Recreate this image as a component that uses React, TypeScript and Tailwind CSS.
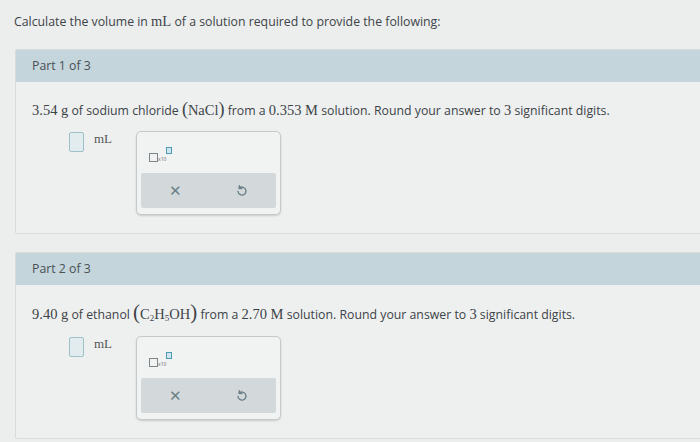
const sans = { fontFamily: '"Open Sans", "DejaVu Sans", sans-serif' }

function Serif({ children }: { children: React.ReactNode }) {
  return <span className="font-['Liberation_Serif',serif] text-[14.5px]">{children}</span>
}

function UndoIcon() {
  return (
    <svg width="12" height="13" viewBox="0 0 12 13" fill="none" stroke="#6b7f88" strokeWidth="1.4" strokeLinecap="round">
      <path d="M3.2 4.2 A4 4 0 1 1 2 7.5" />
      <polyline points="3.4 1.6 3.2 4.3 5.9 4.5" />
    </svg>
  )
}

function AnswerRow() {
  return (
    <div className="flex items-start">
      <div className="flex items-center gap-[10px] mt-[1px]">
        <div className="w-[15px] h-[20px] border border-[#9ec1c9] bg-[#e2ecee] rounded-[2px]" />
        <span className="font-['Liberation_Serif',serif] text-[13px] text-[#555] -mt-[6px]">mL</span>
      </div>
      <div className="ml-[24px] w-[145px] h-[84px] border border-[#c4cacc] rounded-[5px] bg-[#f1f3f3] shadow-[0_1px_2px_rgba(0,0,0,0.15)] px-[4px] pt-[12px]">
        <div className="flex items-end pl-[8px] h-[18px]">
          <div className="w-[9px] h-[9px] border border-[#7c8589]" />
          <span className="text-[5px] text-[#666] leading-none">x10</span>
          <div className="w-[6px] h-[7px] border border-[#4d9ab3] bg-[#cfe6ee] mb-[8px]" />
        </div>
        <div className="mt-[11px] h-[35px] bg-[#d3d9db] rounded-[2px] flex items-center justify-between px-[28px]">
          <span className="text-[#6b7f88] text-[15px] leading-none" style={sans}>✕</span>
          <UndoIcon />
        </div>
      </div>
    </div>
  )
}

function Part({ label, tall, children }: { label: string; tall?: boolean; children: React.ReactNode }) {
  return (
    <div className="border border-[#d8dcdc] rounded-[2px] bg-[#eef0f0]">
      <div className="h-[32px] bg-[#c4d5db] flex items-center pl-[16px] text-[12.3px] text-[#4a5055]">{label}</div>
      <div className="pl-[16px] pt-[17px] pb-[18px]">
        <div className="text-[12.3px] text-[#3d4347] h-[22px] flex items-center">{children}</div>
        <div className={tall ? 'mt-[12px] pl-[37px]' : 'mt-[10px] pl-[37px]'}>
          <AnswerRow />
        </div>
      </div>
    </div>
  )
}

export default function App() {
  return (
    <div className="w-[700px] h-[442px] overflow-hidden bg-[#eceeee]" style={sans}>
      <div className="pl-[14px] pt-[11px] text-[12.3px] text-[#3d4347]">
        Calculate the volume in <Serif>mL</Serif> of a solution required to provide the following:
      </div>
      <div className="pl-[15px] mt-[16px] flex flex-col gap-[18px] -mr-[4px]">
        <Part label="Part 1 of 3">
          <span>
            <Serif>3.54 g</Serif> of sodium chloride <Serif><span className="text-[18px]">(</span>NaCl<span className="text-[18px]">)</span></Serif> from a <Serif>0.353 M</Serif> solution. Round your answer to <Serif>3</Serif> significant digits.
          </span>
        </Part>
        <Part label="Part 2 of 3" tall>
          <span>
            <Serif>9.40 g</Serif> of ethanol{' '}
            <Serif>
              <span className="text-[21px]">(</span>C<sub className="text-[9px]">2</sub>H<sub className="text-[9px]">5</sub>OH<span className="text-[21px]">)</span>
            </Serif>{' '}
            from a <Serif>2.70 M</Serif> solution. Round your answer to <Serif>3</Serif> significant digits.
          </span>
        </Part>
      </div>
    </div>
  )
}
